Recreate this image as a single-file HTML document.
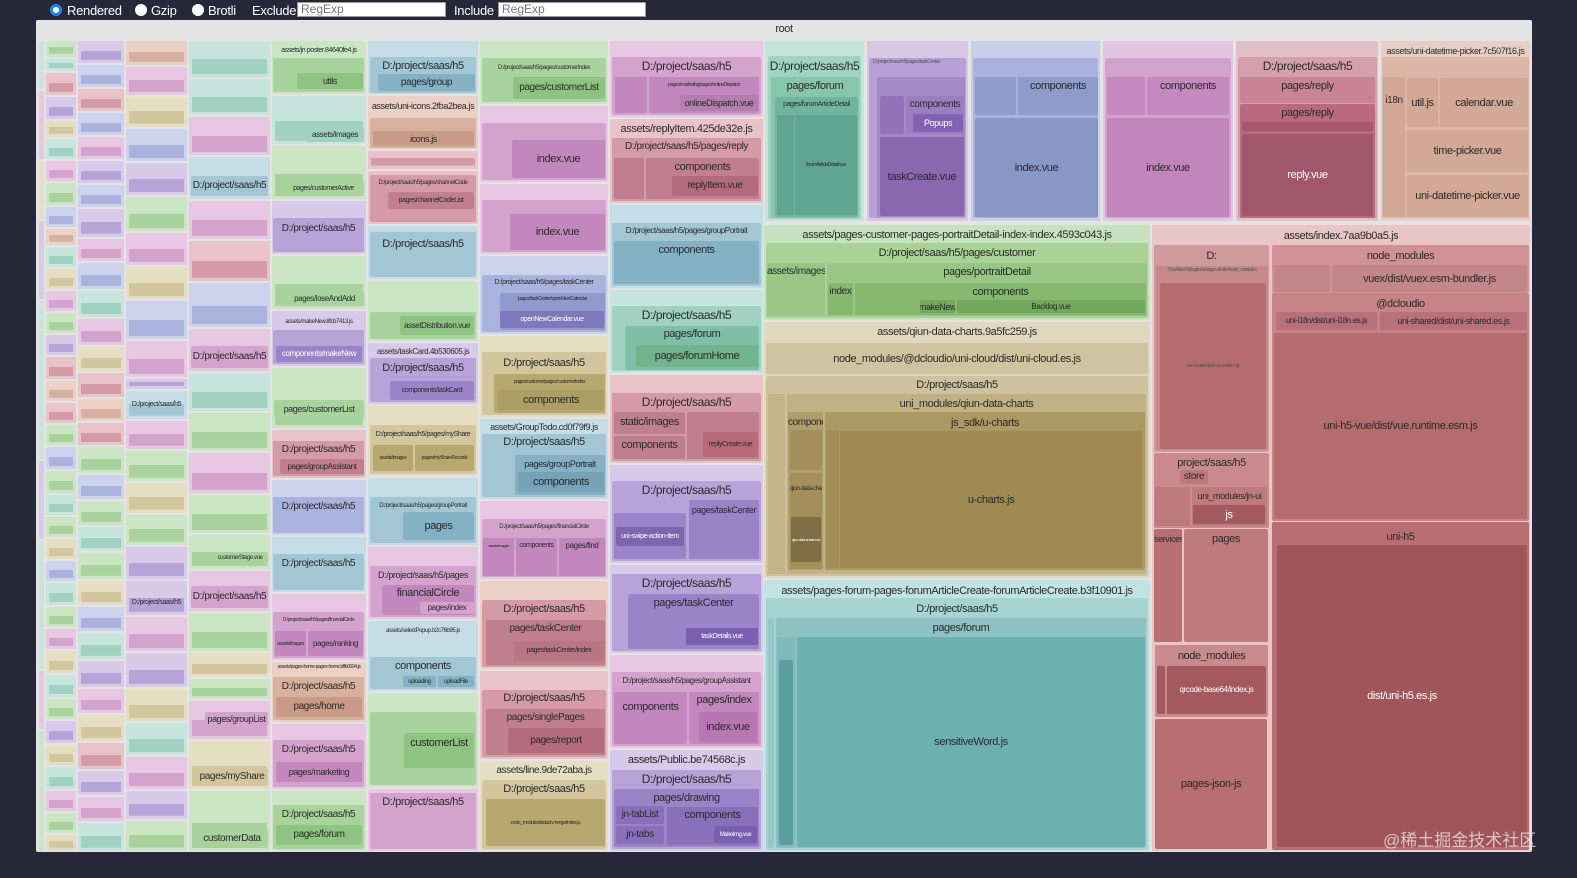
<!DOCTYPE html>
<html><head><meta charset="utf-8"><style>
*{margin:0;padding:0}
body{width:1577px;height:878px;background:#262738;position:relative;overflow:hidden;font-family:"Liberation Sans","Noto Sans CJK SC",sans-serif}
.b{position:absolute;box-sizing:border-box;overflow:hidden;text-align:center;white-space:nowrap;color:#2a2a2a;font-size:11px;line-height:16px;border-radius:2px;letter-spacing:-0.4px}
.c{display:flex;align-items:center;justify-content:center}
.w{color:#fff}
.f{font-size:5px;line-height:9px;color:#777}
.g{--l:#cbe5c5;--d:#a9d39d;--x:#8fc381}
.y{--l:#e6dec3;--d:#d2c69f;--x:#b8a86f}
.u{--l:#cdd3ec;--d:#aab3de;--x:#8f9acd}
.p{--l:#e8c7e3;--d:#d4a3cd;--x:#c287bc}
.v{--l:#d8cbe9;--d:#b7a3d8;--x:#9a84c7}
.t{--l:#c7e5dc;--d:#a0d1c1;--x:#7fbfa9}
.n{--l:#ead0c5;--d:#d8b09f;--x:#c99a86}
.r{--l:#e9c3ca;--d:#d49aa6;--x:#c07f8e}
.q{--l:#c5dde6;--d:#a2c6d3;--x:#84b1c4}
.o{background:var(--l)}.m{background:var(--d)}.k{background:var(--x)}
.s{background:linear-gradient(var(--d),var(--d)) no-repeat 3px calc(100% - 3px)/calc(100% - 6px) 42%,var(--l);border:1px solid #e4e4e4}
.top{position:absolute;color:#fff;font-size:13px;top:3px;letter-spacing:-0.3px}
.rad{position:absolute;top:4px;width:12px;height:12px;border-radius:50%;background:#fff}
.inp{position:absolute;top:2px;height:15px;background:#fff;border:1px solid #999;box-sizing:border-box;font-size:12px;color:#777;line-height:13px;padding-left:3px}
</style></head><body>
<div class="rad" style="left:50px;border:3px solid #1e88e5;width:6px;height:6px"></div><span class="top" style="left:67px">Rendered</span>
<div class="rad" style="left:135px"></div><span class="top" style="left:151px">Gzip</span>
<div class="rad" style="left:192px"></div><span class="top" style="left:208px">Brotli</span>
<span class="top" style="left:252px">Exclude</span><div class="inp" style="left:297px;width:149px">RegExp</div>
<span class="top" style="left:454px">Include</span><div class="inp" style="left:498px;width:148px">RegExp</div>

<div class="b" style="left:36px;top:20px;width:1496px;height:832px;background:#e4e4e4;font-size:11px;padding-top:1px">root</div>

<!-- thin col -->
<div class="b s t" style="left:38px;top:40px;width:7px;height:50px"></div>
<div class="b s p" style="left:38px;top:90px;width:7px;height:70px"></div>
<div class="b s y" style="left:38px;top:160px;width:7px;height:60px"></div>
<div class="b s v" style="left:38px;top:220px;width:7px;height:80px"></div>
<div class="b s t" style="left:38px;top:300px;width:7px;height:160px"></div>
<div class="b s v" style="left:38px;top:460px;width:7px;height:80px"></div>
<div class="b s t" style="left:38px;top:540px;width:7px;height:130px"></div>
<div class="b s p" style="left:38px;top:670px;width:7px;height:60px"></div>
<div class="b s g" style="left:38px;top:730px;width:7px;height:122px"></div>

<!-- col A -->
<div class="b s g" style="left:45px;top:40px;width:32px;height:18px"></div>
<div class="b s t" style="left:45px;top:58px;width:32px;height:14px"></div>
<div class="b s r" style="left:45px;top:72px;width:32px;height:24px"></div>
<div class="b s v" style="left:45px;top:96px;width:32px;height:24px"></div>
<div class="b s y" style="left:45px;top:120px;width:32px;height:18px"></div>
<div class="b s t" style="left:45px;top:138px;width:32px;height:22px"></div>
<div class="b s p" style="left:45px;top:160px;width:32px;height:22px"></div>
<div class="b s g" style="left:45px;top:182px;width:32px;height:24px"></div>
<div class="b s u" style="left:45px;top:206px;width:32px;height:22px"></div>
<div class="b s n" style="left:45px;top:228px;width:32px;height:18px"></div>
<div class="b s t" style="left:45px;top:246px;width:32px;height:22px"></div>
<div class="b s y" style="left:45px;top:268px;width:32px;height:22px"></div>
<div class="b s p" style="left:45px;top:290px;width:32px;height:22px"></div>
<div class="b s g" style="left:45px;top:312px;width:32px;height:22px"></div>
<div class="b s v" style="left:45px;top:334px;width:32px;height:22px"></div>
<div class="b s r" style="left:45px;top:356px;width:32px;height:24px"></div>
<div class="b s n" style="left:45px;top:380px;width:32px;height:22px"></div>
<div class="b s r" style="left:45px;top:402px;width:32px;height:22px"></div>
<div class="b s g" style="left:45px;top:424px;width:32px;height:22px"></div>
<div class="b s u" style="left:45px;top:446px;width:32px;height:24px"></div>
<div class="b s g" style="left:45px;top:470px;width:32px;height:24px"></div>
<div class="b s t" style="left:45px;top:494px;width:32px;height:22px"></div>
<div class="b s g" style="left:45px;top:516px;width:32px;height:22px"></div>
<div class="b s y" style="left:45px;top:538px;width:32px;height:22px"></div>
<div class="b s u" style="left:45px;top:560px;width:32px;height:22px"></div>
<div class="b s t" style="left:45px;top:582px;width:32px;height:24px"></div>
<div class="b s g" style="left:45px;top:606px;width:32px;height:22px"></div>
<div class="b s p" style="left:45px;top:628px;width:32px;height:22px"></div>
<div class="b s y" style="left:45px;top:650px;width:32px;height:24px"></div>
<div class="b s t" style="left:45px;top:674px;width:32px;height:24px"></div>
<div class="b s g" style="left:45px;top:698px;width:32px;height:22px"></div>
<div class="b s v" style="left:45px;top:720px;width:32px;height:24px"></div>
<div class="b s y" style="left:45px;top:744px;width:32px;height:22px"></div>
<div class="b s t" style="left:45px;top:766px;width:32px;height:24px"></div>
<div class="b s p" style="left:45px;top:790px;width:32px;height:22px"></div>
<div class="b s g" style="left:45px;top:812px;width:32px;height:22px"></div>
<div class="b s y" style="left:45px;top:834px;width:32px;height:18px"></div>

<!-- col B -->
<div class="b s v" style="left:77px;top:40px;width:48px;height:24px"></div>
<div class="b s u" style="left:77px;top:64px;width:48px;height:24px"></div>
<div class="b s r" style="left:77px;top:88px;width:48px;height:24px"></div>
<div class="b s u" style="left:77px;top:112px;width:48px;height:24px"></div>
<div class="b s p" style="left:77px;top:136px;width:48px;height:24px"></div>
<div class="b s v" style="left:77px;top:160px;width:48px;height:24px"></div>
<div class="b s u" style="left:77px;top:184px;width:48px;height:24px"></div>
<div class="b s v" style="left:77px;top:208px;width:48px;height:30px"></div>
<div class="b s p" style="left:77px;top:238px;width:48px;height:24px"></div>
<div class="b s u" style="left:77px;top:262px;width:48px;height:28px"></div>
<div class="b s t" style="left:77px;top:290px;width:48px;height:28px"></div>
<div class="b s p" style="left:77px;top:318px;width:48px;height:28px"></div>
<div class="b s y" style="left:77px;top:346px;width:48px;height:26px"></div>
<div class="b s r" style="left:77px;top:372px;width:48px;height:26px"></div>
<div class="b s n" style="left:77px;top:398px;width:48px;height:24px"></div>
<div class="b s r" style="left:77px;top:422px;width:48px;height:24px"></div>
<div class="b s g" style="left:77px;top:446px;width:48px;height:28px"></div>
<div class="b s u" style="left:77px;top:474px;width:48px;height:26px"></div>
<div class="b s g" style="left:77px;top:500px;width:48px;height:26px"></div>
<div class="b s t" style="left:77px;top:526px;width:48px;height:26px"></div>
<div class="b s g" style="left:77px;top:552px;width:48px;height:28px"></div>
<div class="b s y" style="left:77px;top:580px;width:48px;height:26px"></div>
<div class="b s u" style="left:77px;top:606px;width:48px;height:26px"></div>
<div class="b s t" style="left:77px;top:632px;width:48px;height:28px"></div>
<div class="b s v" style="left:77px;top:660px;width:48px;height:28px"></div>
<div class="b s p" style="left:77px;top:688px;width:48px;height:26px"></div>
<div class="b s y" style="left:77px;top:714px;width:48px;height:28px"></div>
<div class="b s r" style="left:77px;top:742px;width:48px;height:28px"></div>
<div class="b s v" style="left:77px;top:770px;width:48px;height:26px"></div>
<div class="b s p" style="left:77px;top:796px;width:48px;height:26px"></div>
<div class="b s t" style="left:77px;top:822px;width:48px;height:30px"></div>

<!-- col C -->
<div class="b s n" style="left:125px;top:40px;width:63px;height:26px"></div>
<div class="b s p" style="left:125px;top:66px;width:63px;height:30px"></div>
<div class="b s y" style="left:125px;top:96px;width:63px;height:32px"></div>
<div class="b s u" style="left:125px;top:128px;width:63px;height:34px"></div>
<div class="b s v" style="left:125px;top:162px;width:63px;height:34px"></div>
<div class="b s g" style="left:125px;top:196px;width:63px;height:36px"></div>
<div class="b s p" style="left:125px;top:232px;width:63px;height:34px"></div>
<div class="b s y" style="left:125px;top:266px;width:63px;height:34px"></div>
<div class="b s u" style="left:125px;top:300px;width:63px;height:40px"></div>
<div class="b s p" style="left:125px;top:340px;width:63px;height:38px"></div>
<div class="b s v" style="left:125px;top:378px;width:63px;height:12px"></div>
<div class="b s q" style="left:125px;top:390px;width:63px;height:30px;font-size:7px;padding-top:6px">D:/project/saas/h5</div>
<div class="b s p" style="left:125px;top:420px;width:63px;height:30px"></div>
<div class="b s g" style="left:125px;top:450px;width:63px;height:32px"></div>
<div class="b s y" style="left:125px;top:482px;width:63px;height:32px"></div>
<div class="b s g" style="left:125px;top:514px;width:63px;height:32px"></div>
<div class="b s v" style="left:125px;top:546px;width:63px;height:34px"></div>
<div class="b s v" style="left:125px;top:580px;width:63px;height:36px;font-size:7px;padding-top:14px">D:/project/saas/h5</div>
<div class="b s p" style="left:125px;top:616px;width:63px;height:36px"></div>
<div class="b s v" style="left:125px;top:652px;width:63px;height:36px"></div>
<div class="b s y" style="left:125px;top:688px;width:63px;height:34px"></div>
<div class="b s t" style="left:125px;top:722px;width:63px;height:34px"></div>
<div class="b s p" style="left:125px;top:756px;width:63px;height:34px"></div>
<div class="b s v" style="left:125px;top:790px;width:63px;height:30px"></div>
<div class="b s g" style="left:125px;top:820px;width:63px;height:32px"></div>

<!-- col D -->
<div class="b s t" style="left:188px;top:40px;width:83px;height:38px"></div>
<div class="b s t" style="left:188px;top:78px;width:83px;height:38px"></div>
<div class="b s p" style="left:188px;top:116px;width:83px;height:40px"></div>
<div class="b o q" style="left:188px;top:156px;width:83px;height:44px;border:1px solid #e4e4e4"></div>
<div class="b m q c" style="left:191px;top:176px;width:77px;height:20px;font-size:10px">D:/project/saas/h5</div>
<div class="b s p" style="left:188px;top:200px;width:83px;height:40px"></div>
<div class="b s r" style="left:188px;top:240px;width:83px;height:42px"></div>
<div class="b s u" style="left:188px;top:282px;width:83px;height:46px"></div>
<div class="b o p" style="left:188px;top:328px;width:83px;height:44px;border:1px solid #e4e4e4"></div>
<div class="b m p c" style="left:191px;top:346px;width:77px;height:22px;font-size:10px">D:/project/saas/h5</div>
<div class="b s t" style="left:188px;top:372px;width:83px;height:40px"></div>
<div class="b s g" style="left:188px;top:412px;width:83px;height:40px"></div>
<div class="b s p" style="left:188px;top:452px;width:83px;height:42px"></div>
<div class="b s g" style="left:188px;top:494px;width:83px;height:40px"></div>
<div class="b s g" style="left:188px;top:534px;width:83px;height:36px"></div>
<div class="b m g c" style="left:212px;top:552px;width:56px;height:12px;font-size:6px">customerStage.vue</div>
<div class="b o p" style="left:188px;top:570px;width:83px;height:42px;border:1px solid #e4e4e4"></div>
<div class="b m p c" style="left:191px;top:586px;width:77px;height:22px;font-size:10px">D:/project/saas/h5</div>
<div class="b s g" style="left:188px;top:612px;width:83px;height:40px"></div>
<div class="b s y" style="left:188px;top:652px;width:83px;height:26px"></div>
<div class="b s g" style="left:188px;top:678px;width:83px;height:22px"></div>
<div class="b s p" style="left:188px;top:700px;width:83px;height:40px"></div>
<div class="b m p c" style="left:205px;top:712px;width:63px;height:14px;font-size:9px">pages/groupList</div>
<div class="b s y" style="left:188px;top:740px;width:83px;height:50px"></div>
<div class="b m y c" style="left:196px;top:768px;width:72px;height:18px;font-size:10px">pages/myShare</div>
<div class="b s g" style="left:188px;top:790px;width:83px;height:62px"></div>
<div class="b m g c" style="left:196px;top:830px;width:72px;height:18px;font-size:10px">customerData</div>

<!-- col E -->
<div class="b o g" style="left:271px;top:40px;width:96px;height:55px;border:1px solid #e4e4e4;font-size:7px;padding-top:2px">assets/jn poster.84640fe4.js</div>
<div class="b m g" style="left:273px;top:58px;width:91px;height:34px"></div>
<div class="b k g c" style="left:297px;top:73px;width:66px;height:16px;font-size:9px">utils</div>
<div class="b s t" style="left:271px;top:95px;width:96px;height:50px"></div>
<div class="b m t c" style="left:306px;top:128px;width:58px;height:14px;font-size:8px">assets/images</div>
<div class="b s g" style="left:271px;top:145px;width:96px;height:55px"></div>
<div class="b m g c" style="left:283px;top:182px;width:81px;height:14px;font-size:7px">pages/customerActive</div>
<div class="b o v" style="left:271px;top:200px;width:96px;height:55px;border:1px solid #e4e4e4"></div>
<div class="b m v" style="left:273px;top:218px;width:91px;height:34px;font-size:10px;padding-top:3px">D:/project/saas/h5</div>
<div class="b s g" style="left:271px;top:255px;width:96px;height:55px"></div>
<div class="b m g c" style="left:285px;top:291px;width:79px;height:15px;font-size:8px">pages/loseAndAdd</div>
<div class="b o v" style="left:271px;top:310px;width:96px;height:57px;border:1px solid #e4e4e4;font-size:6px;padding-top:3px">assets/makeNew.8fcb7413.js</div>
<div class="b m v" style="left:273px;top:330px;width:91px;height:34px"></div>
<div class="b k v c" style="left:276px;top:346px;width:86px;height:16px;font-size:8px;color:#fff">components/makeNew</div>
<div class="b s g" style="left:271px;top:367px;width:96px;height:62px"></div>
<div class="b m g c" style="left:274px;top:400px;width:90px;height:18px;font-size:9px">pages/customerList</div>
<div class="b o r" style="left:271px;top:429px;width:96px;height:50px;border:1px solid #e4e4e4"></div>
<div class="b m r" style="left:273px;top:441px;width:91px;height:35px;font-size:10px;padding-top:1px">D:/project/saas/h5</div>
<div class="b k r c" style="left:280px;top:459px;width:84px;height:15px;font-size:8px">pages/groupAssistant</div>
<div class="b o u" style="left:271px;top:479px;width:96px;height:57px;border:1px solid #e4e4e4"></div>
<div class="b m u" style="left:273px;top:497px;width:91px;height:36px;font-size:10px;padding-top:2px">D:/project/saas/h5</div>
<div class="b o q" style="left:271px;top:536px;width:96px;height:57px;border:1px solid #e4e4e4"></div>
<div class="b m q" style="left:273px;top:554px;width:91px;height:36px;font-size:10px;padding-top:2px">D:/project/saas/h5</div>
<div class="b o p" style="left:271px;top:593px;width:96px;height:68px;border:1px solid #e4e4e4"></div>
<div class="b m p" style="left:273px;top:612px;width:91px;height:46px;font-size:5px;padding-top:0">D:/project/saas/h5/pages/financialCircle</div>
<div class="b k p c" style="left:308px;top:631px;width:55px;height:25px;font-size:8px">pages/ranking</div>
<div class="b k p c" style="left:275px;top:631px;width:31px;height:25px;font-size:5px">assets/images</div>
<div class="b o n" style="left:271px;top:661px;width:96px;height:62px;border:1px solid #e4e4e4;font-size:5px;line-height:10px">assets/pages-home-pages-home.bffb0004.js</div>
<div class="b m n" style="left:273px;top:677px;width:91px;height:43px;font-size:10px;padding-top:2px">D:/project/saas/h5</div>
<div class="b k n c" style="left:276px;top:697px;width:86px;height:20px;font-size:10px">pages/home</div>
<div class="b o p" style="left:271px;top:723px;width:96px;height:67px;border:1px solid #e4e4e4"></div>
<div class="b m p" style="left:273px;top:740px;width:91px;height:47px;font-size:10px;padding-top:2px">D:/project/saas/h5</div>
<div class="b k p c" style="left:276px;top:762px;width:86px;height:20px;font-size:9px">pages/marketing</div>
<div class="b o g" style="left:271px;top:790px;width:96px;height:62px;border:1px solid #e4e4e4"></div>
<div class="b m g" style="left:273px;top:805px;width:91px;height:44px;font-size:10px;padding-top:2px">D:/project/saas/h5</div>
<div class="b k g c" style="left:276px;top:825px;width:86px;height:20px;font-size:10px">pages/forum</div>

<!-- col F -->
<div class="b o q" style="left:367px;top:40px;width:112px;height:55px;border:1px solid #e4e4e4"></div>
<div class="b m q" style="left:370px;top:57px;width:106px;height:36px;font-size:11px;padding-top:1px">D:/project/saas/h5</div>
<div class="b k q c" style="left:378px;top:74px;width:97px;height:17px;font-size:10px">pages/group</div>
<div class="b o n" style="left:367px;top:95px;width:112px;height:55px;border:1px solid #e4e4e4;font-size:9px;padding-top:2px">assets/uni-icons.2fba2bea.js</div>
<div class="b m n" style="left:370px;top:118px;width:106px;height:30px"></div>
<div class="b k n c" style="left:373px;top:131px;width:101px;height:15px;font-size:9px">icons.js</div>
<div class="b s r" style="left:367px;top:150px;width:112px;height:20px"></div>
<div class="b o r" style="left:367px;top:170px;width:112px;height:55px;border:1px solid #e4e4e4"></div>
<div class="b m r" style="left:370px;top:175px;width:106px;height:47px;font-size:6px;padding-top:0">D:/project/saas/h5/pages/channelCode</div>
<div class="b k r c" style="left:388px;top:192px;width:86px;height:17px;font-size:7px">pages/channelCodeList</div>
<div class="b o q" style="left:367px;top:225px;width:112px;height:55px;border:1px solid #e4e4e4"></div>
<div class="b m q" style="left:370px;top:232px;width:106px;height:45px;font-size:11px;padding-top:4px">D:/project/saas/h5</div>
<div class="b o g" style="left:367px;top:280px;width:112px;height:62px;border:1px solid #e4e4e4"></div>
<div class="b m g" style="left:370px;top:312px;width:106px;height:27px"></div>
<div class="b k g c" style="left:400px;top:316px;width:74px;height:19px;font-size:8px">assetDistribution.vue</div>
<div class="b o v" style="left:367px;top:342px;width:112px;height:63px;border:1px solid #e4e4e4;font-size:8px;padding-top:1px">assets/taskCard.4b530605.js</div>
<div class="b m v" style="left:370px;top:358px;width:106px;height:44px;font-size:11px;padding-top:2px">D:/project/saas/h5</div>
<div class="b k v c" style="left:390px;top:381px;width:84px;height:19px;font-size:7px">components/taskCard</div>
<div class="b o y" style="left:367px;top:405px;width:112px;height:72px;border:1px solid #e4e4e4"></div>
<div class="b m y" style="left:370px;top:425px;width:106px;height:49px;font-size:7px;padding-top:2px">D:/project/saas/h5/pages/myShare</div>
<div class="b k y c" style="left:373px;top:445px;width:40px;height:26px;font-size:5px">assets/images</div>
<div class="b k y c" style="left:415px;top:445px;width:59px;height:26px;font-size:5px">pages/myShareRecords</div>
<div class="b o q" style="left:367px;top:477px;width:112px;height:69px;border:1px solid #e4e4e4"></div>
<div class="b m q" style="left:370px;top:497px;width:106px;height:46px;font-size:6px;padding-top:1px">D:/project/saas/h5/pages/groupPortrait</div>
<div class="b k q c" style="left:403px;top:512px;width:71px;height:28px;font-size:11px">pages</div>
<div class="b o p" style="left:367px;top:546px;width:112px;height:74px;border:1px solid #e4e4e4"></div>
<div class="b m p" style="left:370px;top:566px;width:106px;height:51px;font-size:9px;padding-top:1px">D:/project/saas/h5/pages</div>
<div class="b k p" style="left:382px;top:585px;width:92px;height:30px;font-size:11px;padding-top:0">financialCircle</div>
<div class="b m p c" style="left:420px;top:602px;width:54px;height:12px;font-size:8px">pages/index</div>
<div class="b o q" style="left:367px;top:620px;width:112px;height:72px;border:1px solid #e4e4e4;font-size:6px;padding-top:2px">assets/selectPopup.b2c76b95.js</div>
<div class="b m q" style="left:370px;top:657px;width:106px;height:32px;font-size:11px;padding-top:1px">components</div>
<div class="b k q c" style="left:403px;top:676px;width:33px;height:11px;font-size:6px">uploading</div>
<div class="b k q c" style="left:438px;top:676px;width:36px;height:11px;font-size:6px">uploadFile</div>
<div class="b o g" style="left:367px;top:692px;width:112px;height:96px;border:1px solid #e4e4e4"></div>
<div class="b m g" style="left:370px;top:712px;width:106px;height:73px"></div>
<div class="b k g" style="left:404px;top:733px;width:70px;height:35px;font-size:11px;padding-top:2px">customerList</div>
<div class="b o p" style="left:367px;top:788px;width:112px;height:64px;border:1px solid #e4e4e4"></div>
<div class="b m p" style="left:370px;top:793px;width:106px;height:56px;font-size:11px;padding-top:1px">D:/project/saas/h5</div>

<!-- col G -->
<div class="b o g" style="left:479px;top:40px;width:130px;height:65px;border:1px solid #e4e4e4"></div>
<div class="b m g" style="left:482px;top:58px;width:124px;height:44px;font-size:6px;padding-top:2px">D:/project/saas/h5/pages/customerIndex</div>
<div class="b k g c" style="left:513px;top:77px;width:92px;height:22px;font-size:10px">pages/customerList</div>
<div class="b o p" style="left:479px;top:105px;width:130px;height:78px;border:1px solid #e4e4e4"></div>
<div class="b m p" style="left:482px;top:123px;width:124px;height:57px"></div>
<div class="b k p c" style="left:512px;top:140px;width:93px;height:38px;font-size:11px">index.vue</div>
<div class="b o p" style="left:479px;top:183px;width:130px;height:72px;border:1px solid #e4e4e4"></div>
<div class="b m p" style="left:482px;top:200px;width:124px;height:52px"></div>
<div class="b k p c" style="left:510px;top:214px;width:95px;height:36px;font-size:11px">index.vue</div>
<div class="b o u" style="left:479px;top:255px;width:130px;height:80px;border:1px solid #e4e4e4"></div>
<div class="b m u" style="left:482px;top:275px;width:124px;height:57px;font-size:7px;padding-top:0">D:/project/saas/h5/pages/taskCenter</div>
<div class="b k u" style="left:500px;top:293px;width:105px;height:37px;font-size:5px;line-height:12px">pages/taskCenter/openNewCalendar</div>
<div class="b c" style="left:500px;top:311px;width:104px;height:17px;background:#8078bd;color:#fff;font-size:7px">openNewCalendar.vue</div>
<div class="b o y" style="left:479px;top:335px;width:130px;height:83px;border:1px solid #e4e4e4"></div>
<div class="b m y" style="left:482px;top:352px;width:124px;height:63px;font-size:11px;padding-top:3px">D:/project/saas/h5</div>
<div class="b k y" style="left:494px;top:374px;width:111px;height:39px;font-size:5px;line-height:16px">pages/customer/pages/customerIndex</div>
<div class="b c" style="left:498px;top:390px;width:106px;height:20px;background:#ad9e64;font-size:11px">components</div>
<div class="b o q" style="left:479px;top:418px;width:130px;height:82px;border:1px solid #e4e4e4;font-size:9px;padding-top:0">assets/GroupTodo.cd0f79f9.js</div>
<div class="b m q" style="left:482px;top:434px;width:124px;height:63px;font-size:11px;padding-top:0">D:/project/saas/h5</div>
<div class="b k q" style="left:515px;top:455px;width:90px;height:40px;font-size:9px;padding-top:1px">pages/groupPortrait</div>
<div class="b c" style="left:518px;top:472px;width:86px;height:20px;background:#76a2b9;font-size:11px">components</div>
<div class="b o p" style="left:479px;top:500px;width:130px;height:80px;border:1px solid #e4e4e4"></div>
<div class="b m p" style="left:482px;top:519px;width:124px;height:58px;font-size:6px;padding-top:0">D:/project/saas/h5/pages/financialCircle</div>
<div class="b k p" style="left:483px;top:538px;width:31px;height:38px;font-size:4px">assets/images</div>
<div class="b k p" style="left:516px;top:538px;width:41px;height:38px;font-size:7px">components</div>
<div class="b k p" style="left:559px;top:538px;width:46px;height:38px;font-size:8px">pages/find</div>
<div class="b o n" style="left:479px;top:580px;width:130px;height:90px;border:1px solid #e4e4e4"></div>
<div class="b m r" style="left:482px;top:600px;width:124px;height:67px;font-size:11px;padding-top:1px">D:/project/saas/h5</div>
<div class="b k r" style="left:486px;top:620px;width:119px;height:45px;font-size:10px;padding-top:1px">pages/taskCenter</div>
<div class="b m r c" style="left:514px;top:641px;width:90px;height:20px;font-size:7px;background:#b87584">pages/taskCenter/index</div>
<div class="b o r" style="left:479px;top:670px;width:130px;height:90px;border:1px solid #e4e4e4"></div>
<div class="b m r" style="left:482px;top:690px;width:124px;height:67px;font-size:11px;padding-top:0">D:/project/saas/h5</div>
<div class="b k r" style="left:486px;top:709px;width:119px;height:46px;font-size:10px;padding-top:1px">pages/singlePages</div>
<div class="b c" style="left:508px;top:728px;width:96px;height:25px;background:#b46c7c;font-size:10px">pages/report</div>
<div class="b o y" style="left:479px;top:760px;width:130px;height:92px;border:1px solid #e4e4e4;font-size:10px;padding-top:2px">assets/line.9de72aba.js</div>
<div class="b m y" style="left:482px;top:780px;width:124px;height:69px;font-size:11px;padding-top:1px">D:/project/saas/h5</div>
<div class="b k y c" style="left:486px;top:799px;width:119px;height:47px;font-size:5px">node_modules/lodash.merge/index.js</div>

<!-- col H -->
<div class="b o p" style="left:609px;top:40px;width:155px;height:78px;border:1px solid #e4e4e4"></div>
<div class="b m p" style="left:612px;top:57px;width:149px;height:58px;font-size:12px;padding-top:1px">D:/project/saas/h5</div>
<div class="b k p" style="left:615px;top:77px;width:32px;height:36px"></div>
<div class="b k p" style="left:649px;top:77px;width:110px;height:36px;font-size:5px">pages/marketing/pages/onlineDispatch</div>
<div class="b c" style="left:680px;top:95px;width:78px;height:16px;background:#b47eae;font-size:9px">onlineDispatch.vue</div>
<div class="b o r" style="left:609px;top:118px;width:155px;height:86px;border:1px solid #e4e4e4;font-size:11px;padding-top:2px">assets/replyItem.425de32e.js</div>
<div class="b m r" style="left:612px;top:138px;width:149px;height:63px;font-size:10px;padding-top:1px">D:/project/saas/h5/pages/reply</div>
<div class="b k r" style="left:614px;top:158px;width:30px;height:41px"></div>
<div class="b k r" style="left:646px;top:158px;width:113px;height:41px;font-size:11px;padding-top:1px">components</div>
<div class="b c" style="left:672px;top:176px;width:86px;height:20px;background:#b36a7c;font-size:10px">replyItem.vue</div>
<div class="b o q" style="left:609px;top:204px;width:155px;height:85px;border:1px solid #e4e4e4"></div>
<div class="b m q" style="left:612px;top:223px;width:149px;height:63px;font-size:8px;padding-top:0">D:/project/saas/h5/pages/groupPortrait</div>
<div class="b k q" style="left:614px;top:241px;width:145px;height:43px;font-size:11px;padding-top:1px">components</div>
<div class="b o t" style="left:609px;top:289px;width:155px;height:85px;border:1px solid #e4e4e4"></div>
<div class="b m t" style="left:612px;top:306px;width:149px;height:65px;font-size:12px;padding-top:1px">D:/project/saas/h5</div>
<div class="b k t" style="left:625px;top:326px;width:134px;height:44px;font-size:11px;padding-top:0">pages/forum</div>
<div class="b c" style="left:636px;top:345px;width:122px;height:22px;background:#72b48c;font-size:11px">pages/forumHome</div>
<div class="b o r" style="left:609px;top:374px;width:155px;height:90px;border:1px solid #e4e4e4"></div>
<div class="b m r" style="left:612px;top:393px;width:149px;height:68px;font-size:12px;padding-top:1px">D:/project/saas/h5</div>
<div class="b k r" style="left:614px;top:412px;width:71px;height:22px;font-size:11px;padding-top:2px">static/images</div>
<div class="b k r" style="left:614px;top:436px;width:71px;height:23px;font-size:11px;padding-top:1px">components</div>
<div class="b k r" style="left:687px;top:412px;width:72px;height:47px"></div>
<div class="b c" style="left:703px;top:432px;width:55px;height:25px;background:#b76b7a;font-size:7px">replyCreate.vue</div>
<div class="b o v" style="left:609px;top:464px;width:155px;height:100px;border:1px solid #e4e4e4"></div>
<div class="b m v" style="left:612px;top:481px;width:149px;height:80px;font-size:12px;padding-top:1px">D:/project/saas/h5</div>
<div class="b k v" style="left:689px;top:500px;width:70px;height:59px;font-size:9px;padding-top:2px">pages/taskCenter</div>
<div class="b k v" style="left:614px;top:513px;width:72px;height:46px"></div>
<div class="b c w" style="left:616px;top:527px;width:68px;height:19px;background:#7f64b0;font-size:7px">uni-swipe-action-item</div>
<div class="b o v" style="left:609px;top:564px;width:155px;height:90px;border:1px solid #e4e4e4"></div>
<div class="b m v" style="left:612px;top:574px;width:149px;height:77px;font-size:12px;padding-top:1px">D:/project/saas/h5</div>
<div class="b k v" style="left:628px;top:594px;width:131px;height:55px;font-size:11px;padding-top:1px">pages/taskCenter</div>
<div class="b c w" style="left:686px;top:628px;width:72px;height:17px;background:#7a5fb0;font-size:7px">taskDetails.vue</div>
<div class="b o p" style="left:609px;top:654px;width:155px;height:95px;border:1px solid #e4e4e4"></div>
<div class="b m p" style="left:612px;top:672px;width:149px;height:74px;font-size:8px;padding-top:1px">D:/project/saas/h5/pages/groupAssistant</div>
<div class="b k p" style="left:614px;top:692px;width:73px;height:52px;font-size:11px;padding-top:7px">components</div>
<div class="b k p" style="left:689px;top:692px;width:70px;height:52px;font-size:11px;padding-top:0">pages/index</div>
<div class="b c" style="left:699px;top:712px;width:58px;height:30px;background:#b876b2;font-size:11px">index.vue</div>
<div class="b o v" style="left:609px;top:749px;width:155px;height:103px;border:1px solid #e4e4e4;font-size:11px;padding-top:2px">assets/Public.be74568c.js</div>
<div class="b m v" style="left:612px;top:770px;width:149px;height:79px;font-size:12px;padding-top:1px">D:/project/saas/h5</div>
<div class="b k v" style="left:614px;top:789px;width:145px;height:58px;font-size:11px;padding-top:1px">pages/drawing</div>
<div class="b c" style="left:616px;top:806px;width:48px;height:18px;background:#8a70bb;font-size:10px">jn-tabList</div>
<div class="b c" style="left:616px;top:826px;width:48px;height:18px;background:#8a70bb;font-size:10px">jn-tabs</div>
<div class="b" style="left:667px;top:807px;width:91px;height:38px;background:#8a70bb;font-size:11px;padding-top:0">components</div>
<div class="b c w" style="left:714px;top:826px;width:43px;height:17px;background:#7a5fb0;font-size:6px">MakeImg.vue</div>

<!-- right top row -->
<div class="b" style="left:764px;top:40px;width:101px;height:182px;background:#c5e4da;border:1px solid #e4e4e4"></div>
<div class="b" style="left:768px;top:56px;width:93px;height:163px;background:#a0d3c1;font-size:12px;padding-top:2px">D:/project/saas/h5</div>
<div class="b" style="left:771px;top:77px;width:88px;height:141px;background:#88c5af;font-size:11px;padding-top:1px">pages/forum</div>
<div class="b" style="left:775px;top:97px;width:83px;height:120px;background:#72b59f;font-size:7px;padding-top:0">pages/forumArticleDetail</div>
<div class="b" style="left:777px;top:115px;width:17px;height:100px;background:#5fa591"></div>
<div class="b c" style="left:795px;top:115px;width:62px;height:100px;background:#5fa591;font-size:5px">forumArticleDetail.vue</div>

<div class="b" style="left:866px;top:40px;width:103px;height:182px;background:#d7c6e4;border:1px solid #e4e4e4"></div>
<div class="b f" style="left:869px;top:58px;width:97px;height:160px;background:#b7a0d6;color:#555;text-align:left;padding-left:4px">D:/project/saas/h5/pages/taskCenter</div>
<div class="b" style="left:877px;top:77px;width:88px;height:140px;background:#a68ac8"></div>
<div class="b" style="left:880px;top:96px;width:24px;height:38px;background:#9273b9"></div>
<div class="b" style="left:906px;top:96px;width:58px;height:38px;background:#9b7dc0;font-size:10px;padding-top:1px">components</div>
<div class="b c w" style="left:913px;top:114px;width:50px;height:18px;background:#8262b2;font-size:9px">Popups</div>
<div class="b c" style="left:880px;top:137px;width:84px;height:79px;background:#8a68b0;font-size:11px">taskCreate.vue</div>

<div class="b" style="left:970px;top:40px;width:131px;height:182px;background:#c8cfe8;border:1px solid #e4e4e4"></div>
<div class="b" style="left:973px;top:58px;width:125px;height:160px;background:#a8b2dc"></div>
<div class="b" style="left:975px;top:77px;width:41px;height:38px;background:#8e9bcb"></div>
<div class="b" style="left:1018px;top:77px;width:80px;height:38px;background:#8e9bcb;font-size:11px;padding-top:1px">components</div>
<div class="b c" style="left:975px;top:118px;width:123px;height:99px;background:#8997c5;font-size:11px">index.vue</div>

<div class="b" style="left:1102px;top:40px;width:132px;height:182px;background:#e5c6e2;border:1px solid #e4e4e4"></div>
<div class="b" style="left:1105px;top:58px;width:126px;height:160px;background:#d1a2cc"></div>
<div class="b" style="left:1107px;top:77px;width:38px;height:38px;background:#c489be"></div>
<div class="b" style="left:1147px;top:77px;width:82px;height:38px;background:#c489be;font-size:11px;padding-top:1px">components</div>
<div class="b c" style="left:1107px;top:118px;width:122px;height:99px;background:#c086bb;font-size:11px">index.vue</div>

<div class="b" style="left:1235px;top:40px;width:144px;height:182px;background:#e2c0c8;border:1px solid #e4e4e4"></div>
<div class="b" style="left:1238px;top:57px;width:139px;height:161px;background:#d59fad;font-size:12px;padding-top:1px">D:/project/saas/h5</div>
<div class="b" style="left:1240px;top:77px;width:135px;height:26px;background:#c88396;font-size:11px;padding-top:1px">pages/reply</div>
<div class="b" style="left:1240px;top:104px;width:135px;height:114px;background:#b96a80;font-size:11px;padding-top:1px">pages/reply</div>
<div class="b" style="left:1242px;top:122px;width:131px;height:9px;background:#a8586e"></div>
<div class="b c w" style="left:1242px;top:134px;width:131px;height:82px;background:#a0566b;font-size:11px">reply.vue</div>

<div class="b" style="left:1380px;top:40px;width:151px;height:182px;background:#e8cfc6;border:1px solid #e4e4e4;font-size:9px;padding-top:2px">assets/uni-datetime-picker.7c507f16.js</div>
<div class="b" style="left:1382px;top:57px;width:147px;height:161px;background:#dcb6a6"></div>
<div class="b" style="left:1383px;top:77px;width:22px;height:140px;background:#d2a896;font-size:10px;padding-top:16px">i18n</div>
<div class="b c" style="left:1407px;top:78px;width:31px;height:49px;background:#d2a896;font-size:11px">util.js</div>
<div class="b c" style="left:1440px;top:78px;width:88px;height:49px;background:#d2a896;font-size:11px">calendar.vue</div>
<div class="b c" style="left:1407px;top:130px;width:121px;height:42px;background:#d2a896;font-size:11px">time-picker.vue</div>
<div class="b c" style="left:1407px;top:175px;width:121px;height:42px;background:#d2a896;font-size:11px">uni-datetime-picker.vue</div>

<!-- green -->
<div class="b" style="left:763px;top:224px;width:388px;height:97px;background:#c8e2c0;border:1px solid #e4e4e4;font-size:11px;padding-top:2px">assets/pages-customer-pages-portraitDetail-index-index.4593c043.js</div>
<div class="b" style="left:766px;top:243px;width:382px;height:75px;background:#a9d198;font-size:11px;padding-top:2px">D:/project/saas/h5/pages/customer</div>
<div class="b" style="left:767px;top:263px;width:58px;height:53px;background:#98c785;font-size:10px;padding-top:1px">assets/images</div>
<div class="b" style="left:827px;top:263px;width:320px;height:53px;background:#98c785;font-size:11px;padding-top:1px">pages/portraitDetail</div>
<div class="b" style="left:828px;top:283px;width:25px;height:32px;background:#86b870;font-size:10px;padding-top:1px">index</div>
<div class="b" style="left:855px;top:283px;width:291px;height:32px;background:#86b870;font-size:11px;padding-top:1px">components</div>
<div class="b c" style="left:920px;top:300px;width:35px;height:13px;background:#73a85f;font-size:9px">makeNew</div>
<div class="b c" style="left:957px;top:300px;width:188px;height:13px;background:#73a85f;font-size:8px">Backlog.vue</div>

<!-- beige charts -->
<div class="b" style="left:763px;top:321px;width:388px;height:258px;background:#e1d8c0;border:1px solid #e4e4e4;font-size:11px;padding-top:2px">assets/qiun-data-charts.9a5fc259.js</div>
<div class="b c" style="left:766px;top:343px;width:382px;height:31px;background:#cfc49f;font-size:11px">node_modules/@dcloudio/uni-cloud/dist/uni-cloud.es.js</div>
<div class="b" style="left:766px;top:376px;width:382px;height:200px;background:#cdc29d;font-size:11px;padding-top:1px">D:/project/saas/h5</div>
<div class="b" style="left:768px;top:394px;width:17px;height:180px;background:#c3b58b"></div>
<div class="b" style="left:787px;top:394px;width:359px;height:180px;background:#c0b285;font-size:11px;padding-top:2px">uni_modules/qiun-data-charts</div>
<div class="b" style="left:788px;top:412px;width:35px;height:158px;background:#b09e6c;font-size:10px;padding-top:3px;text-align:left">components</div>
<div class="b" style="left:790px;top:430px;width:32px;height:40px;background:#a48f5b"></div>
<div class="b" style="left:790px;top:473px;width:32px;height:96px;background:#a48f5b;font-size:6px;padding-top:8px">qiun-data-charts</div>
<div class="b c w" style="left:791px;top:517px;width:30px;height:45px;background:#7f6e45;font-size:4px">qiun-data-charts.vue</div>
<div class="b" style="left:825px;top:412px;width:320px;height:158px;background:#ab9862;font-size:11px;padding-top:3px">js_sdk/u-charts</div>
<div class="b" style="left:826px;top:431px;width:13px;height:137px;background:#a38e58"></div>
<div class="b c" style="left:840px;top:431px;width:302px;height:137px;background:#9f8a52;font-size:11px">u-charts.js</div>

<!-- teal forum -->
<div class="b" style="left:763px;top:579px;width:388px;height:273px;background:#c2e3e4;border:1px solid #e4e4e4;font-size:11px;padding-top:3px">assets/pages-forum-pages-forumArticleCreate-forumArticleCreate.b3f10901.js</div>
<div class="b" style="left:766px;top:598px;width:382px;height:252px;background:#a8d3d3;font-size:11px;padding-top:3px">D:/project/saas/h5</div>
<div class="b" style="left:768px;top:618px;width:6px;height:230px;background:#96c8c8"></div>
<div class="b" style="left:776px;top:618px;width:370px;height:230px;background:#8ec2c2;font-size:11px;padding-top:2px">pages/forum</div>
<div class="b" style="left:777px;top:637px;width:18px;height:210px;background:#80baba"></div>
<div class="b" style="left:779px;top:660px;width:14px;height:185px;background:#5aa0a0"></div>
<div class="b c" style="left:797px;top:637px;width:348px;height:210px;background:#6cb0b0;font-size:11px">sensitiveWord.js</div>

<!-- big red -->
<div class="b" style="left:1151px;top:224px;width:380px;height:628px;background:#e8c6c8;border:1px solid #e4e4e4;font-size:11px;padding-top:3px">assets/index.7aa9b0a5.js</div>
<div class="b" style="left:1154px;top:245px;width:115px;height:207px;background:#cf9a9c;font-size:11px;padding-top:3px">D:</div>
<div class="b f" style="left:1156px;top:266px;width:112px;height:184px;background:#c3898b;color:#555">H:/uAlderX/plugins/uniapp-cli-vite/node_modules</div>
<div class="b c f" style="left:1160px;top:283px;width:106px;height:166px;background:#b46c6e;color:#555">vue-router/dist/vue-router.mjs</div>
<div class="b" style="left:1272px;top:245px;width:257px;height:48px;background:#d09294;font-size:11px;padding-top:3px">node_modules</div>
<div class="b" style="left:1274px;top:265px;width:56px;height:27px;background:#c3878a"></div>
<div class="b c" style="left:1332px;top:265px;width:195px;height:27px;background:#c3878a;font-size:11px">vuex/dist/vuex.esm-bundler.js</div>
<div class="b" style="left:1272px;top:293px;width:257px;height:228px;background:#c88387;font-size:11px;padding-top:3px">@dcloudio</div>
<div class="b c" style="left:1276px;top:312px;width:101px;height:18px;background:#b8707b;font-size:8px">uni-i18n/dist/uni-i18n.es.js</div>
<div class="b c" style="left:1380px;top:312px;width:147px;height:18px;background:#b8707b;font-size:9px">uni-shared/dist/uni-shared.es.js</div>
<div class="b c" style="left:1274px;top:333px;width:253px;height:186px;background:#b46c6e;font-size:11px">uni-h5-vue/dist/vue.runtime.esm.js</div>
<div class="b" style="left:1272px;top:522px;width:257px;height:328px;background:#b96f72;font-size:11px;padding-top:7px">uni-h5</div>
<div class="b c w" style="left:1277px;top:545px;width:250px;height:302px;background:#a05558;font-size:11px">dist/uni-h5.es.js</div>
<div class="b" style="left:1154px;top:453px;width:115px;height:75px;background:#c98a8d;font-size:11px;padding-top:2px">project/saas/h5</div>
<div class="b" style="left:1180px;top:470px;width:28px;height:14px;background:#bd7a7d;font-size:10px;line-height:14px">store</div>
<div class="b" style="left:1155px;top:487px;width:35px;height:39px;background:#be7b7e"></div>
<div class="b" style="left:1192px;top:487px;width:75px;height:39px;background:#be7b7e;font-size:9px;padding-top:1px">uni_modules/jn-ui</div>
<div class="b c w" style="left:1193px;top:505px;width:72px;height:19px;background:#a35a5e;font-size:11px">js</div>
<div class="b" style="left:1154px;top:529px;width:28px;height:113px;background:#b86f72;font-size:9px;padding-top:2px">services</div>
<div class="b" style="left:1184px;top:529px;width:84px;height:113px;background:#be7b7e;font-size:11px;padding-top:2px">pages</div>
<div class="b" style="left:1155px;top:645px;width:113px;height:72px;background:#c98a8d;font-size:11px;padding-top:3px">node_modules</div>
<div class="b" style="left:1157px;top:666px;width:8px;height:48px;background:#a35a5e"></div>
<div class="b c w" style="left:1167px;top:666px;width:99px;height:48px;background:#a35a5e;font-size:8px">qrcode-base64/index.js</div>
<div class="b c" style="left:1155px;top:719px;width:112px;height:130px;background:#b86f72;font-size:11px">pages-json-js</div>

<div style="position:absolute;left:1383px;top:826px;font-size:17px;color:rgba(235,235,235,0.75);font-family:'Liberation Sans','Noto Sans CJK SC',sans-serif">@稀土掘金技术社区</div>
</body></html>
